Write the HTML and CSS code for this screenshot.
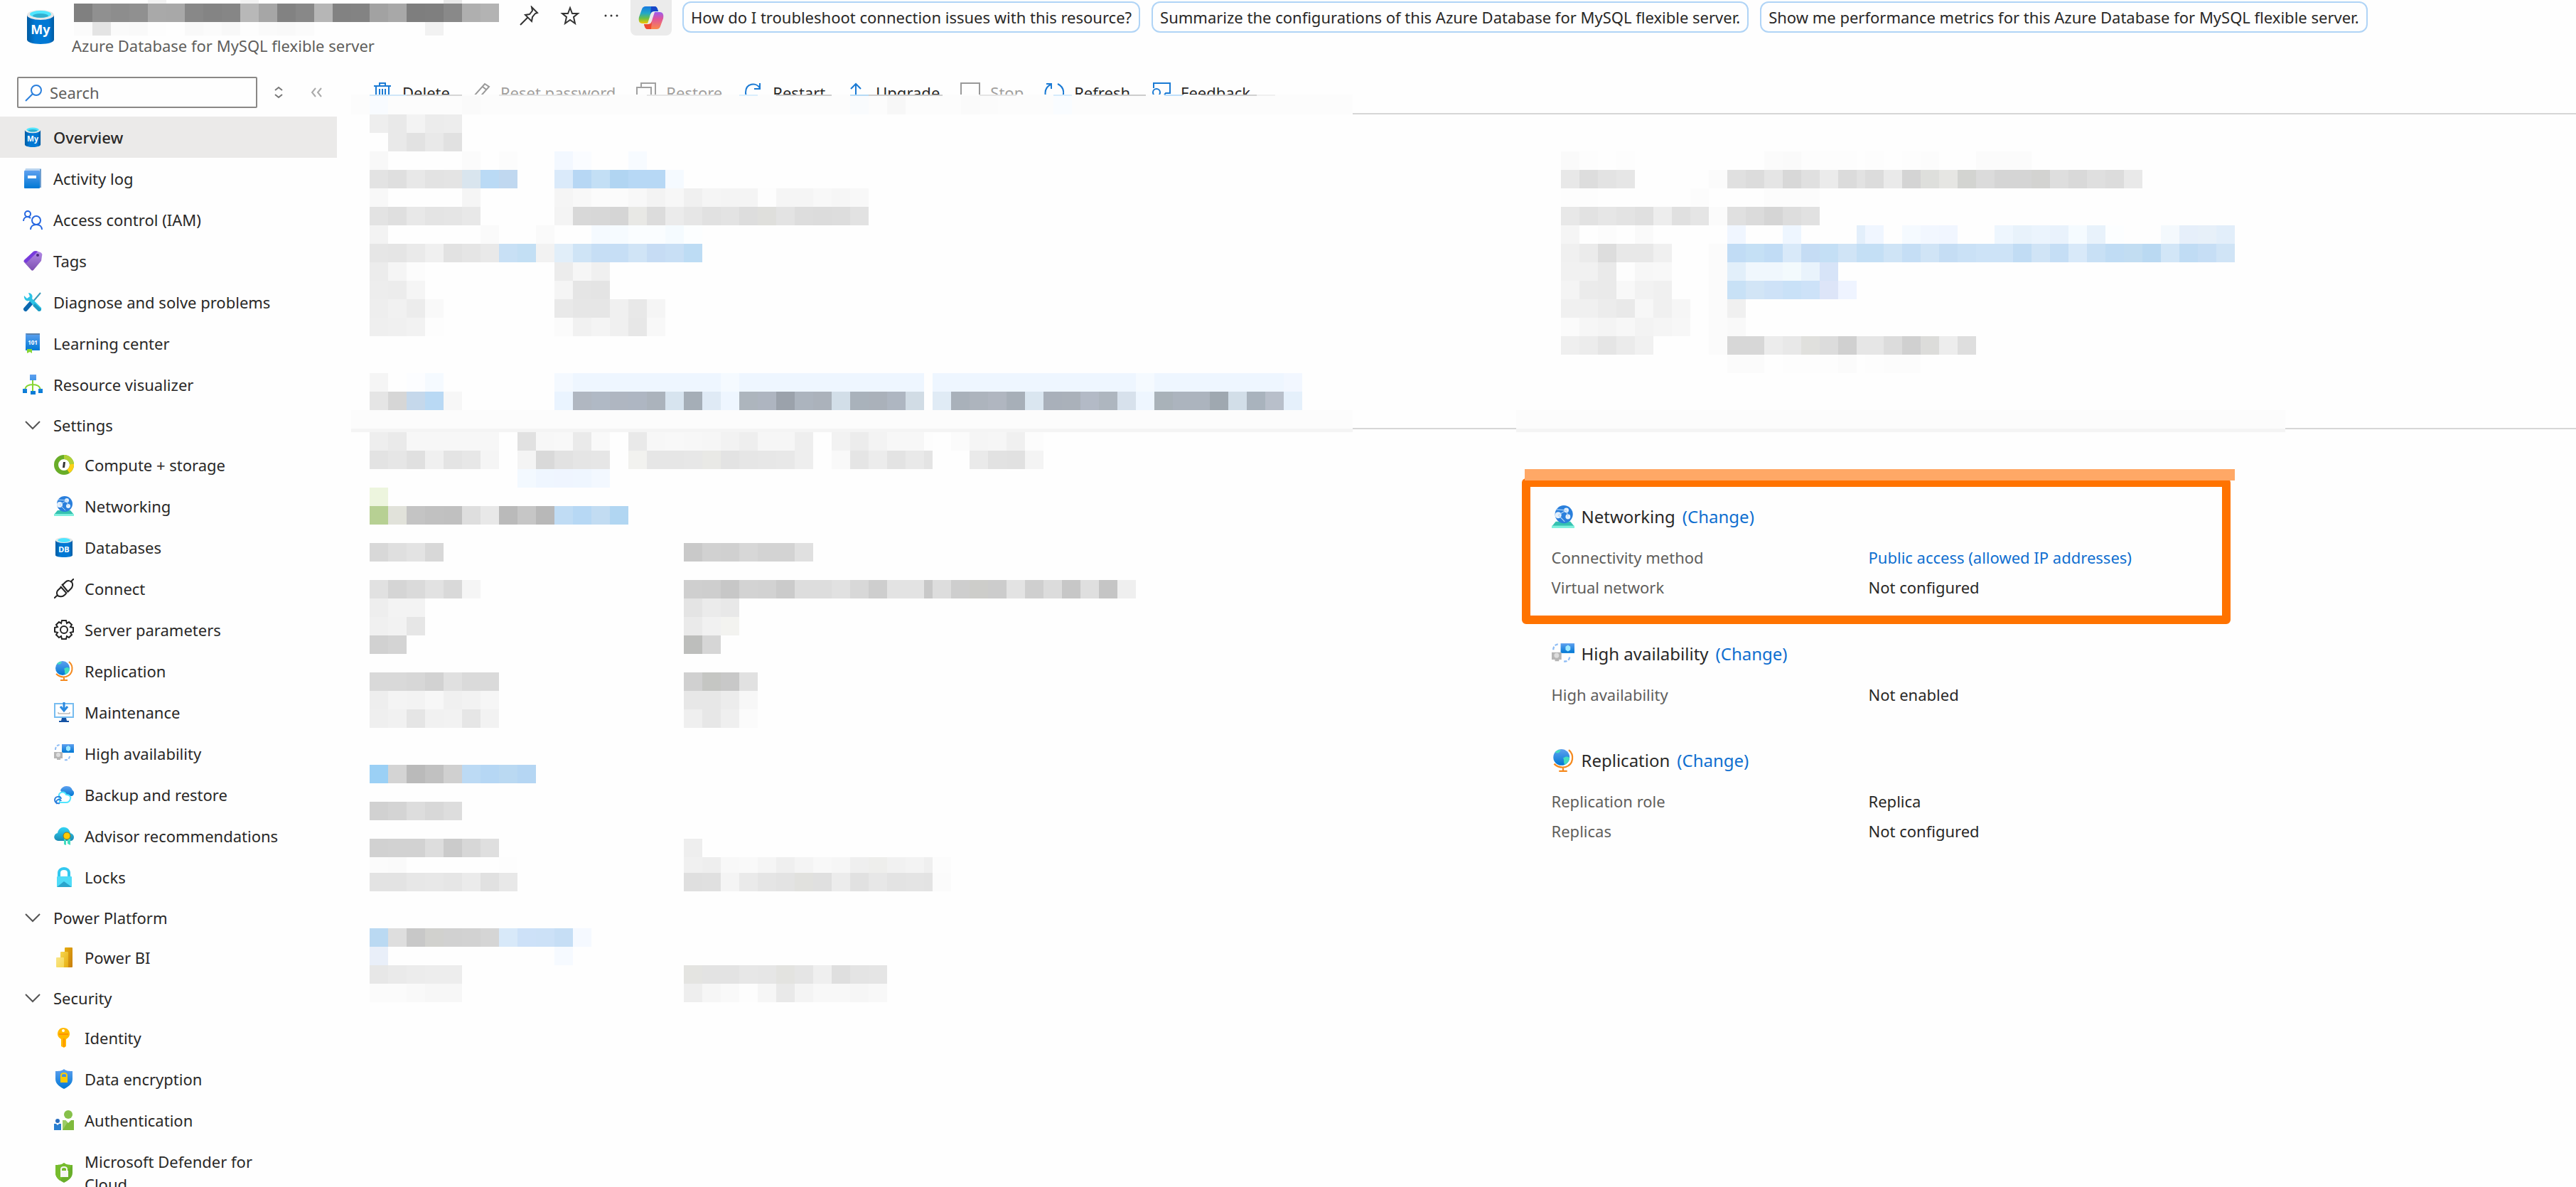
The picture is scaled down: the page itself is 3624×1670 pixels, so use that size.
FILE: index.html
```html
<!DOCTYPE html>
<html lang="en">
<head>
  <meta charset="UTF-8">
  <meta name="viewport" content="width=device-width, initial-scale=1.0">
  <title>Azure Database for MySQL flexible server</title>
  <link rel="stylesheet" href="styles.css">
</head>
<body>
  <!-- shared gradients -->
  <svg class="gradients" aria-hidden="true">
    <defs>
      <linearGradient id="g-blue" x1="0" y1="0" x2="0" y2="1"><stop offset="0" stop-color="#5ea0ef"/><stop offset="1" stop-color="#0078d4"/></linearGradient>
      <linearGradient id="g-db" x1="0" y1="0" x2="1" y2="0"><stop offset="0" stop-color="#005ba1"/><stop offset=".3" stop-color="#0078d4"/><stop offset=".8" stop-color="#0078d4"/><stop offset="1" stop-color="#005ba1"/></linearGradient>
      <linearGradient id="g-cyan" x1="0" y1="0" x2="0" y2="1"><stop offset="0" stop-color="#32d4f5"/><stop offset="1" stop-color="#198ab3"/></linearGradient>
      <linearGradient id="g-purple" x1="0" y1="0" x2="0" y2="1"><stop offset="0" stop-color="#b48be8"/><stop offset="1" stop-color="#7d4fb0"/></linearGradient>
      <linearGradient id="g-pb1" x1="0" y1="0" x2="1" y2="1"><stop offset="0" stop-color="#e6ad10"/><stop offset="1" stop-color="#c87e0e"/></linearGradient>
      <linearGradient id="g-pb2" x1="0" y1="0" x2="1" y2="1"><stop offset="0" stop-color="#f6d751"/><stop offset="1" stop-color="#e6ad10"/></linearGradient>
      <linearGradient id="g-pb3" x1="0" y1="0" x2="1" y2="1"><stop offset="0" stop-color="#f9e589"/><stop offset="1" stop-color="#f6d751"/></linearGradient>
      <linearGradient id="g-cop1" x1="0" y1="0" x2="0" y2="1"><stop offset="0" stop-color="#1878e0"/><stop offset=".4" stop-color="#22a8c8"/><stop offset=".7" stop-color="#6cbf45"/><stop offset="1" stop-color="#f5c500"/></linearGradient>
      <linearGradient id="g-cop2" x1="0" y1="0" x2="0" y2="1"><stop offset="0" stop-color="#9a5cf0"/><stop offset=".4" stop-color="#e0559a"/><stop offset="1" stop-color="#fb8a4a"/></linearGradient>
    </defs>
  </svg>

  <!-- icon sprite -->
  <svg class="sprite" aria-hidden="true">
    <symbol id="i-mysql" viewBox="0 0 38 48">
      <path d="M0 7v35c0 3 8 6 19 6s19-3 19-6V7z" fill="url(#g-db)"/>
      <ellipse cx="19" cy="7" rx="19" ry="7" fill="#e8e8e8"/>
      <ellipse cx="19" cy="6" rx="15" ry="5" fill="#50e6ff"/>
      <ellipse cx="19" cy="8" rx="11" ry="3" fill="#32b0d0"/>
      <text x="19" y="34" text-anchor="middle" class="glyph-my">My</text>
    </symbol>
    <symbol id="i-db" viewBox="0 0 28 28">
      <path d="M2 4v21c0 2 5 3 12 3s12-1 12-3V4z" fill="url(#g-db)"/>
      <ellipse cx="14" cy="4" rx="12" ry="4" fill="#e8e8e8"/>
      <ellipse cx="14" cy="4" rx="9" ry="3" fill="#50e6ff"/>
      <text x="14" y="21" text-anchor="middle" class="glyph-db">DB</text>
    </symbol>
    <symbol id="i-log" viewBox="0 0 28 28">
      <path d="M4 0h22v27h-2V3H3z" fill="#b8d4f0"/><path d="M24 1h2v26h-2z" fill="#6f9fd0"/>
      <rect x="2" y="3" width="22" height="25" rx="1" fill="url(#g-blue)"/>
      <rect x="7" y="10" width="12" height="4" fill="#fff"/>
    </symbol>
    <symbol id="i-iam" viewBox="0 0 28 28">
      <g fill="none" stroke="#2566e0" stroke-width="2"><circle cx="7" cy="6" r="4"/><path d="M1 16c0-4 3-6 6-6 2 0 3 1 4 2"/><circle cx="19" cy="15" r="6"/><path d="M11 28c0-4 3-7 8-7s8 3 8 7"/></g>
    </symbol>
    <symbol id="i-tag" viewBox="0 0 28 28">
      <path d="M2 13 15 1c1-1 3-1 4-1l6 2c2 1 3 3 2 5l-1 7-11 13c-1 1-2 1-3 0L2 16c-1-1-1-2 0-3z" fill="url(#g-purple)"/>
      <path d="M2 13 15 1c1-1 5-1 6 0L5 17l-3-2z" fill="#773adc"/><circle cx="21" cy="6" r="2" fill="#4b2a80"/>
    </symbol>
    <symbol id="i-tools" viewBox="0 0 28 28">
      <path d="M25 1 13 15" stroke="#3a9ab8" stroke-width="2"/><path d="m12 15-8 9" stroke="#0a68b0" stroke-width="6" stroke-linecap="round"/>
      <path d="M2 5l4 4 4-3-2-5c4 0 7 4 5 8l13 13c1 3-2 5-4 4L9 12C5 14 1 9 2 5z" fill="#2cc3e6"/><path d="m17 16 9 8c0 3-2 3-4 3l-8-8z" fill="#1b9cc4"/>
    </symbol>
    <symbol id="i-learn" viewBox="0 0 28 28">
      <rect x="4" y="0" width="20" height="24" fill="url(#g-blue)"/><path d="M4 0h20v2H6z" fill="#5b83ad"/>
      <path d="M6 22h7v6l-3-2-4 2z" fill="#86d633"/><text x="14" y="16" text-anchor="middle" class="glyph-101">101</text>
    </symbol>
    <symbol id="i-visual" viewBox="0 0 28 28">
      <path d="M14 8v16M3 21c1-5 6-7 11-7s10 2 11 7" fill="none" stroke="#86d633" stroke-width="2"/>
      <g fill="url(#g-blue)"><path d="M10 0h9v8h-9zM0 20h6v6H0zM22 20h6v6h-6zM11 23h7v5h-7z"/></g>
    </symbol>
    <symbol id="i-chev" viewBox="0 0 28 28"><path d="m4 9 10 10L24 9" fill="none" stroke="#555" stroke-width="2"/></symbol>
    <symbol id="i-compute" viewBox="0 0 28 28">
      <g fill="none" stroke-width="6"><circle cx="14" cy="14" r="11" stroke="#69ad28"/><path d="M14 3a11 11 0 0 1 11 10" stroke="#b0d136"/><path d="M25 13a11 11 0 0 1-5 10" stroke="#fcd116"/></g>
      <path d="M13 10h3l-1 8h-3z" fill="#333"/>
    </symbol>
    <symbol id="i-net" viewBox="0 0 28 28">
      <path d="M0 26 5 20h18l5 6v2H0z" fill="#35c1b0"/><path d="M0 25h28v3H0z" fill="#7ff0dc"/>
      <circle cx="15" cy="11" r="11" fill="#2a7fdc"/>
      <g fill="#e4f0fc"><circle cx="8" cy="12" r="4"/><circle cx="18" cy="6" r="3"/><circle cx="20" cy="14" r="3"/></g>
      <path d="m8 12 10-6 2 8M5 5l13 1M8 12l8 8" stroke="#b8d8f8" fill="none"/>
    </symbol>
    <symbol id="i-plug" viewBox="0 0 28 28">
      <g fill="none" stroke="#222" stroke-width="2"><path d="m0 28 5-5M28 0l-5 5M10 12l-5 5c-2 3-1 8 3 8 3 1 5 0 7-2l2-2M12 9l4-4c3-3 7-2 9 0 2 3 1 7-1 9l-5 5M9 11l9 10M11 8l9 11"/></g>
    </symbol>
    <symbol id="i-gear" viewBox="0 0 28 28">
      <g fill="none" stroke="#222" stroke-width="2"><circle cx="14" cy="14" r="5"/><path d="M11 1h6l1 4 3-2 4 4-2 3 4 1v6l-4 1 2 3-4 4-3-2-1 4h-6l-1-4-3 2-4-4 2-3-4-1v-6l4-1-2-3 4-4 3 2z"/></g>
    </symbol>
    <symbol id="i-globe" viewBox="0 0 28 28">
      <path d="M21 1c7 6 6 18-4 21-5 1-10 0-14-4M14 22v4M9 27h10" fill="none" stroke="#f58a1f" stroke-width="2"/>
      <circle cx="12" cy="10" r="10" fill="url(#g-blue)"/>
      <path d="M4 4c3-4 6-3 7-3-1 3-3 5-7 3zM14 11c4-3 7-2 8 0-1 5-3 7-6 8-2-3 0-5-2-8z" fill="#43dcc0"/>
    </symbol>
    <symbol id="i-maint" viewBox="0 0 28 28">
      <rect x="1" y="2" width="26" height="19" fill="#fff" stroke="#76bcf0" stroke-width="2"/>
      <path d="M14 0v11m-5-5 5 6 5-6" fill="none" stroke="#2a8ae0" stroke-width="3"/><path d="M6 14v2h16v-2" fill="none" stroke="#999"/>
      <path d="M11 22h6l1 4h3v2H7v-2h3z" fill="#1553a4"/>
    </symbol>
    <symbol id="i-ha" viewBox="0 0 28 28">
      <rect x="11" y="1" width="17" height="12" fill="url(#g-blue)"/><path d="M20 3 23 5v4l-3 2-3-2V5z" fill="#9feaff"/>
      <path d="M0 12h12v9H9v2H4v-2H0z" fill="#b5b5b5"/><circle cx="6" cy="16" r="3" fill="#ddd"/>
      <path d="M2 9c0-4 2-7 7-7M22 18c0 3-3 6-7 5" fill="none" stroke="#8fbdf5" stroke-width="2" stroke-dasharray="4 2"/>
    </symbol>
    <symbol id="i-backup" viewBox="0 0 28 28">
      <path d="M9 8c2-5 6-6 9-6 5 0 7 3 8 6 3 1 3 7-1 8H15z" fill="url(#g-blue)"/>
      <path d="M7 14c1-4 8-5 10 0 5 0 7 3 6 6-1 4-3 5-6 5H8z" fill="#fff" stroke="#50e6ff" stroke-width="2"/>
      <path d="M1 22c0-6 8-7 9-2M8 26c-4 1-7-1-7-5M4 27c-3-5 4-9 6-4" fill="none" stroke="#2a7fdc" stroke-width="2"/>
    </symbol>
    <symbol id="i-advisor" viewBox="0 0 28 28">
      <path d="M6 21C-2 20-1 11 5 10c1-6 6-9 10-8 4 0 7 4 8 8 7 2 6 10 1 11z" fill="url(#g-cyan)"/>
      <path d="M14 18h3v9l-3-1zM19 18h4v9l-4-2z" fill="#43dcc0"/><circle cx="18" cy="14" r="5" fill="#ffca00" stroke="#8a7520"/>
    </symbol>
    <symbol id="i-lock" viewBox="0 0 28 28">
      <path d="M7 14V8c0-8 14-8 14 0v6" fill="none" stroke="#32c8f0" stroke-width="4"/>
      <rect x="4" y="13" width="21" height="15" rx="1" fill="#4fdcf8"/><path d="m4 28 10-8 11 8z" fill="#2aa5cc"/>
    </symbol>
    <symbol id="i-pbi" viewBox="0 0 28 28">
      <rect x="15" y="0" width="11" height="28" rx="1" fill="url(#g-pb1)"/><rect x="9" y="6" width="11" height="22" rx="1" fill="url(#g-pb2)"/><rect x="3" y="14" width="11" height="14" rx="1" fill="url(#g-pb3)"/>
    </symbol>
    <symbol id="i-key" viewBox="0 0 28 28">
      <path d="M13 0c6 0 9 4 9 9 0 3-2 5-5 7v10l-3 2-4-2V16c-3-2-5-4-5-7 0-5 3-9 8-9z" fill="#ffb900"/><circle cx="13" cy="4" r="2" fill="#fff"/><path d="M7 9h13M14 15v12" stroke="#ff9300" stroke-width="2"/>
    </symbol>
    <symbol id="i-shield" viewBox="0 0 28 28">
      <path d="M14 0c3 3 8 3 12 3v11c0 7-6 11-12 14C8 25 2 21 2 14V3c4 0 9 0 12-3z" fill="url(#g-blue)"/>
      <path d="M10 12V9c0-4 8-4 8 0v3" fill="none" stroke="#ffca00" stroke-width="2"/><rect x="9" y="11" width="10" height="8" fill="#ffca00"/>
    </symbol>
    <symbol id="i-auth" viewBox="0 0 28 28">
      <circle cx="20" cy="6" r="6" fill="#86c04a"/><path d="M12 14h4l4 4 4-4h4v14H12z" fill="#7fba3c"/><path d="M12 14h4l3 3-7 11z" fill="#9ccc65"/>
      <circle cx="5" cy="15" r="3" fill="#2a6fc0"/><path d="M0 19h3l2 2 2-2h3v9H0z" fill="#2a7fd0"/>
    </symbol>
    <symbol id="i-defender" viewBox="0 0 28 28">
      <path d="M14 0c3 3 8 3 12 3v11c0 7-6 11-12 14C8 25 2 21 2 14V3c4 0 9 0 12-3z" fill="#68ae2a"/><path d="M14 0C11 3 6 3 2 3v11c0 5 3 8 6 11L26 3c-4 0-9 0-12-3z" fill="#76bc2d"/>
      <path d="M10 12V9c0-4 8-4 8 0v3" fill="none" stroke="#f5f5f5" stroke-width="2"/><rect x="9" y="11" width="11" height="9" fill="#f5f5f5"/>
    </symbol>

    <symbol id="i-pin" viewBox="0 0 28 28"><path d="m18 2 8 8-3 1-4 5-1 6-9-9 6-1 4-5zM12 17 2 27" fill="none" stroke="#333" stroke-width="2"/></symbol>
    <symbol id="i-star" viewBox="0 0 28 28"><path d="m14 3 3 8h8l-6 5 2 9-7-5-7 5 2-9-6-5h8z" fill="none" stroke="#333" stroke-width="2"/></symbol>
    <symbol id="i-dots" viewBox="0 0 28 28"><g fill="#333"><circle cx="6" cy="14" r="1.5"/><circle cx="14" cy="14" r="1.5"/><circle cx="22" cy="14" r="1.5"/></g></symbol>
    <symbol id="i-copilot" viewBox="0 0 36 34">
      <path d="M10 1h13c3 0 4 3 5 7h-6c-4 0-5 4-6 8l-3 9H6c-5 0-6-4-5-9L5 5c1-3 3-4 5-4z" fill="url(#g-cop1)"/><path d="M18 1h5c3 0 4 3 5 7h-6c-3 0-4 1-5 4z" fill="#1646c8"/>
      <path d="M26 33H13c-3 0-4-3-5-7h6c4 0 5-4 6-8l3-9h7c5 0 6 4 5 9l-4 11c-1 3-3 4-5 4z" fill="url(#g-cop2)"/><path d="M18 33h-5c-3 0-4-3-5-7h6c3 0 4-1 5-4z" fill="#ee4a30"/>
    </symbol>
    <symbol id="i-search" viewBox="0 0 28 28"><path d="M2 26 12 16" stroke="#2a7fdc" stroke-width="2"/><circle cx="17" cy="11" r="7" fill="none" stroke="#2a7fdc" stroke-width="2"/></symbol>
    <symbol id="i-updown" viewBox="0 0 28 28"><path d="m9 11 5-4 5 4M9 17l5 4 5-4" fill="none" stroke="#777" stroke-width="2"/></symbol>
    <symbol id="i-collapse" viewBox="0 0 28 28"><path d="m12 8-5 6 5 6M20 8l-5 6 5 6" fill="none" stroke="#aaa" stroke-width="2"/></symbol>
    <symbol id="i-trash" viewBox="0 0 28 28"><path d="M2 5h24M10 5V1h8v4M5 5v22h18V5M10 9v14M14 9v14M18 9v14" fill="none" stroke="#1a7ad4" stroke-width="2"/></symbol>
    <symbol id="i-pencil" viewBox="0 0 28 28"><path d="m20 2 6 4L9 25l-7 2 2-7zM17 6l5 4" fill="none" stroke="#999" stroke-width="2"/></symbol>
    <symbol id="i-restore" viewBox="0 0 28 28"><path d="M7 6V1h20v20h-5M1 7h20v20H1z" fill="none" stroke="#a0a0a0" stroke-width="2"/></symbol>
    <symbol id="i-restart" viewBox="0 0 28 28"><path d="M24 1v8h-8M24 8C19-1 4 1 4 14c0 7 5 11 11 11" fill="none" stroke="#1a7ad4" stroke-width="2"/></symbol>
    <symbol id="i-upgrade" viewBox="0 0 28 28"><path d="M14 18V2M7 9l7-7 7 7M3 19h22" fill="none" stroke="#1a7ad4" stroke-width="2"/></symbol>
    <symbol id="i-stop" viewBox="0 0 28 28"><path d="M1 1h26v26H1z" fill="none" stroke="#999" stroke-width="2"/></symbol>
    <symbol id="i-refresh" viewBox="0 0 28 28"><path d="M3 2h7v7M9 3C-1 8-1 22 9 26M19 2c10 5 11 17 2 23" fill="none" stroke="#1a7ad4" stroke-width="2"/></symbol>
    <symbol id="i-feedback" viewBox="0 0 28 28"><path d="M4 8V1h23v14l-6 0-4 5M1 27c0-7 13-7 13 0" fill="none" stroke="#1a7ad4" stroke-width="2"/><circle cx="8" cy="14" r="5" fill="none" stroke="#1a7ad4" stroke-width="2"/></symbol>
  </svg>

  <header class="topbar">
    <svg class="resource-logo"><use href="#i-mysql"/></svg>
    <div class="resource">
      <div class="resource-row">
        <svg class="mosaic resource-name" data-mosaic="title" role="img" aria-label="Resource name hidden"></svg>
        <div class="resource-actions">
          <button aria-label="Pin"><svg class="icon"><use href="#i-pin"/></svg></button>
          <button aria-label="Favorite"><svg class="icon"><use href="#i-star"/></svg></button>
          <button aria-label="More"><svg class="icon"><use href="#i-dots"/></svg></button>
        </div>
        <button class="copilot" aria-label="Copilot"><svg><use href="#i-copilot"/></svg></button>
        <div class="prompts">
          <button class="prompt">How do I troubleshoot connection issues with this resource?</button>
          <button class="prompt">Summarize the configurations of this Azure Database for MySQL flexible server.</button>
          <button class="prompt">Show me performance metrics for this Azure Database for MySQL flexible server.</button>
        </div>
      </div>
      <div class="resource-type">Azure Database for MySQL flexible server</div>
    </div>
  </header>

  <div class="layout">
    <aside class="sidebar">
      <div class="search-row">
        <label class="search"><svg class="icon"><use href="#i-search"/></svg><input type="text" placeholder="Search" aria-label="Search menu"></label>
        <button aria-label="Expand all"><svg class="icon"><use href="#i-updown"/></svg></button>
        <button aria-label="Collapse menu"><svg class="icon"><use href="#i-collapse"/></svg></button>
      </div>
      <nav class="menu">
        <a class="item active" href="#"><svg class="icon"><use href="#i-mysql"/></svg>Overview</a>
        <a class="item" href="#"><svg class="icon"><use href="#i-log"/></svg>Activity log</a>
        <a class="item" href="#"><svg class="icon"><use href="#i-iam"/></svg>Access control (IAM)</a>
        <a class="item" href="#"><svg class="icon"><use href="#i-tag"/></svg>Tags</a>
        <a class="item" href="#"><svg class="icon"><use href="#i-tools"/></svg>Diagnose and solve problems</a>
        <a class="item" href="#"><svg class="icon"><use href="#i-learn"/></svg>Learning center</a>
        <a class="item" href="#"><svg class="icon"><use href="#i-visual"/></svg>Resource visualizer</a>
        <button class="item group"><svg class="icon"><use href="#i-chev"/></svg>Settings</button>
        <a class="item sub" href="#"><svg class="icon"><use href="#i-compute"/></svg>Compute + storage</a>
        <a class="item sub" href="#"><svg class="icon"><use href="#i-net"/></svg>Networking</a>
        <a class="item sub" href="#"><svg class="icon"><use href="#i-db"/></svg>Databases</a>
        <a class="item sub" href="#"><svg class="icon"><use href="#i-plug"/></svg>Connect</a>
        <a class="item sub" href="#"><svg class="icon"><use href="#i-gear"/></svg>Server parameters</a>
        <a class="item sub" href="#"><svg class="icon"><use href="#i-globe"/></svg>Replication</a>
        <a class="item sub" href="#"><svg class="icon"><use href="#i-maint"/></svg>Maintenance</a>
        <a class="item sub" href="#"><svg class="icon"><use href="#i-ha"/></svg>High availability</a>
        <a class="item sub" href="#"><svg class="icon"><use href="#i-backup"/></svg>Backup and restore</a>
        <a class="item sub" href="#"><svg class="icon"><use href="#i-advisor"/></svg>Advisor recommendations</a>
        <a class="item sub" href="#"><svg class="icon"><use href="#i-lock"/></svg>Locks</a>
        <button class="item group"><svg class="icon"><use href="#i-chev"/></svg>Power Platform</button>
        <a class="item sub" href="#"><svg class="icon"><use href="#i-pbi"/></svg>Power BI</a>
        <button class="item group"><svg class="icon"><use href="#i-chev"/></svg>Security</button>
        <a class="item sub" href="#"><svg class="icon"><use href="#i-key"/></svg>Identity</a>
        <a class="item sub" href="#"><svg class="icon"><use href="#i-shield"/></svg>Data encryption</a>
        <a class="item sub" href="#"><svg class="icon"><use href="#i-auth"/></svg>Authentication</a>
        <a class="item sub tall" href="#"><svg class="icon"><use href="#i-defender"/></svg>Microsoft Defender for Cloud</a>
      </nav>
    </aside>

    <main class="content">
      <div class="toolbar">
        <button><svg class="icon"><use href="#i-trash"/></svg>Delete</button>
        <button disabled><svg class="icon"><use href="#i-pencil"/></svg>Reset password</button>
        <button disabled><svg class="icon"><use href="#i-restore"/></svg>Restore</button>
        <button><svg class="icon"><use href="#i-restart"/></svg>Restart</button>
        <button><svg class="icon"><use href="#i-upgrade"/></svg>Upgrade</button>
        <button disabled><svg class="icon"><use href="#i-stop"/></svg>Stop</button>
        <button><svg class="icon"><use href="#i-refresh"/></svg>Refresh</button>
        <button><svg class="icon"><use href="#i-feedback"/></svg>Feedback</button>
      </div>

      <div class="divider divider-top">
        <div class="veil veil-left"><svg class="mosaic" data-mosaic="edge"></svg></div>
        <div class="line"></div>
      </div>

      <section class="columns essentials">
        <div class="left"><svg class="mosaic" data-mosaic="essentialsLeft" role="img" aria-label="Hidden details"></svg></div>
        <div class="right"><svg class="mosaic" data-mosaic="essentialsRight" role="img" aria-label="Hidden details"></svg></div>
      </section>

      <div class="divider divider-bottom">
        <div class="veil veil-left"></div>
        <div class="line line-gap"></div>
        <div class="veil veil-right"></div>
        <div class="line"></div>
      </div>

      <section class="columns">
        <div class="left"><svg class="mosaic" data-mosaic="properties" role="img" aria-label="Hidden properties"></svg></div>
        <div class="cards">
          <div class="card callout">
            <h2><svg class="icon"><use href="#i-net"/></svg>Networking <a href="#">(Change)</a></h2>
            <dl>
              <dt>Connectivity method</dt><dd><a href="#">Public access (allowed IP addresses)</a></dd>
              <dt>Virtual network</dt><dd>Not configured</dd>
            </dl>
          </div>
          <div class="card">
            <h2><svg class="icon"><use href="#i-ha"/></svg>High availability <a href="#">(Change)</a></h2>
            <dl>
              <dt>High availability</dt><dd>Not enabled</dd>
            </dl>
          </div>
          <div class="card">
            <h2><svg class="icon"><use href="#i-globe"/></svg>Replication <a href="#">(Change)</a></h2>
            <dl>
              <dt>Replication role</dt><dd>Replica</dd>
              <dt>Replicas</dt><dd>Not configured</dd>
            </dl>
          </div>
        </div>
      </section>
    </main>
  </div>
  <script src="mosaic.js"></script>
</body>
</html>
```
FILE: styles.css
```css
* {
  box-sizing: border-box;
}

body {
  margin: 0;
  height: 100vh;
  overflow: hidden;
  background: #fefefe;
  color: #292827;
  font-family: "Noto Sans", "Open Sans", sans-serif;
  font-size: 22px;
  line-height: 32px;
}

a {
  color: #0f6fd0;
  text-decoration: none;
}

button {
  display: flex;
  align-items: center;
  padding: 0;
  border: none;
  background: none;
  color: inherit;
  font: inherit;
  cursor: pointer;
}

.gradients {
  position: absolute;
  width: 0;
  height: 0;
}

.sprite {
  display: none;
}

.icon {
  flex: none;
  width: 28px;
  height: 28px;
}

.mosaic {
  display: block;
  shape-rendering: crispEdges;
}

.glyph-my,
.glyph-db,
.glyph-101 {
  fill: #fff;
  font-weight: bold;
}

.glyph-my {
  font-size: 18px;
}

.glyph-db {
  font-size: 11px;
}

.glyph-101 {
  font-size: 8px;
}

/* header */
.topbar {
  display: flex;
  height: 108px;
  padding-left: 38px;
}

.resource-logo {
  flex: none;
  width: 38px;
  height: 48px;
  margin-top: 14px;
}

.resource {
  flex: 1;
  padding-left: 25px;
}

.resource-row {
  display: flex;
  align-items: flex-start;
  height: 50px;
}

.resource-name {
  flex: none;
  margin-left: 3px;
}

.resource-actions {
  display: flex;
  gap: 30px;
  margin: 8px 13px 0 28px;
}

.copilot {
  justify-content: center;
  width: 58px;
  height: 50px;
  border-radius: 0 0 8px 8px;
  background: #ebebeb;
}

.copilot svg {
  width: 36px;
  height: 34px;
}

.prompts {
  display: flex;
  gap: 16px;
  margin: 2px 0 0 15px;
}

.prompt {
  height: 44px;
  padding: 0 10px;
  border: 2px solid #b0d4f6;
  border-radius: 12px;
  white-space: nowrap;
}

.resource-type {
  color: #605e5c;
  line-height: 28px;
}

/* side menu */
.layout {
  display: flex;
}

.sidebar {
  flex: none;
  width: 494px;
  padding-right: 20px;
}

.search-row {
  display: flex;
  align-items: center;
  gap: 26px;
  height: 44px;
  margin: 0 0 12px 24px;
}

.search-row button {
  width: 28px;
}

.search {
  display: flex;
  align-items: center;
  gap: 8px;
  width: 338px;
  height: 44px;
  padding-left: 8px;
  border: 2px solid #8a8886;
  border-radius: 2px;
}

.search + button {
  margin-left: -10px;
}

.search input {
  width: 100%;
  padding: 0;
  border: none;
  outline: none;
  background: none;
  font: inherit;
}

.search input::placeholder {
  color: #605e5c;
  opacity: 1;
}

.item {
  display: flex;
  align-items: center;
  gap: 15px;
  width: 100%;
  min-height: 58px;
  padding-left: 32px;
  color: #292827;
  text-align: left;
}

.item.active {
  background: #ebeae9;
  font-weight: 500;
}

.group {
  min-height: 55px;
}

.sub {
  padding-left: 76px;
}

.tall {
  padding: 13px 80px 13px 76px;
}

/* main area */
.content {
  flex: 1;
}

.toolbar {
  display: flex;
  align-items: flex-start;
  gap: 29px;
  height: 25px;
  padding: 6px 0 0 30px;
  overflow: hidden;
}

.toolbar button {
  gap: 14px;
}

.toolbar button:disabled {
  color: #a19f9d;
}

.divider {
  display: flex;
}

.divider-top {
  height: 28px;
}

.divider-bottom {
  height: 31px;
}

.veil {
  background: #fcfcfc;
}

.veil-left {
  width: 45%;
  padding-left: 26px;
}

.veil-right {
  width: 1082px;
}

.divider-bottom .veil {
  border-bottom: 5px solid #f4f4f4;
}

.line {
  flex: 1;
  align-self: flex-end;
  height: 2px;
  background: #d6d6d6;
}

.divider-bottom .line {
  margin-bottom: 4px;
}

.line-gap {
  flex: none;
  width: 230px;
}

.columns {
  display: grid;
  grid-template-columns: 11fr 10fr;
}

.essentials {
  height: 416px;
}

.left {
  padding-left: 26px;
}

.right {
  padding: 52px 0 0 62px;
}

.cards {
  padding: 65px 0 0 7px;
}

.card {
  padding: 26px 42px 30px;
}

.callout {
  position: relative;
  width: calc(67% + 4px);
  padding: 26px 30px 19px;
  border: 12px solid #ff7300;
  border-radius: 6px;
}

/* faded bar over the callout's top edge */
.callout::before {
  content: "";
  position: absolute;
  top: -25px;
  left: -8px;
  right: -18px;
  height: 16px;
  background: #ffa866;
}

.card h2 {
  display: flex;
  align-items: center;
  gap: 10px;
  margin: 0 0 20px;
  font-size: 24px;
  font-weight: 400;
  line-height: 32px;
}

.card h2 .icon {
  width: 32px;
  height: 32px;
}

.card dl {
  display: grid;
  grid-template-columns: 446px 1fr;
  margin: 0;
  line-height: 42px;
}

.card dt {
  color: #605e5c;
}

.card dd {
  margin: 0;
}
```
FILE: mosaic.js
```js
// Hidden values are drawn as rows of 26px tiles.
// A row is [y, height, "startColumn:tile tile ...", ...]
// A tile is a two digit grey, a six digit colour, or _ for an empty one.
const TILE = 26;

const mosaics = {
  title: { cols: 23, height: 50, rows: [
    [0, 5, '4:f2', '9:f2', '20:e9'],
    [5, 26, '0:80 90 8d 90 a9 a8 88 84 86 b8 a6 82 88 b6 82 83 a2 a8 7e 7f 89 af b3'],
    [31, 19, '0:fb e4 fa f9 fd _ f9 fb f8 fd fa f9 fb', '19:f2']
  ] },
  edge: { cols: 52, height: 28, rows: [
    [0, 2, '0:cfe6f8 cfe6f8 d5 d5 d5', '7:e5 e5 e5 e5 e5 e5', '15:e5 e5 e5 e5', '20:daeefc _ cc cc cc', '26:b5daf5 cc cc cc cc', '33:e5 e5', '37:d5ebfb _ cc cc cc', '43:bfdffa _ d0 d0 d0 f0'],
    [2, 26, '0:f8fbff', '5:fa', '26:f9fbfd', '28:f7', '32:fa fb', '37:f9fcff']
  ] },
  essentialsLeft: { cols: 52, height: 416, narrow: 30, rows: [
    [0, 26, '0:ee e9 f3 ec ed'],
    [26, 26, '1:e9 e2 e9 e1'],
    [52, 26, '0:f8', '5:fb', '7:fc', '10:f3f8ff fafcff _ _ f7fbff'],
    [78, 26, '0:e3 df e8 e3 e4 d9e5ee badaf5 c0d8f0', '10:daeafa b7d7f4 c3dff5 b1d5f2 b7d8f5 b7d8f5 f5faff'],
    [104, 26, '0:f8', '5:f5', '10:f5 f8 fb fb f8 f3 f7 f0 f5 f4 f4 fd f5 f5 f8 f6 f8'],
    [130, 26, '0:e3 df e8 e4 e5 e8', '10:f4 d8 d7 d5 e8e8e5 dc eb e6 e1 e3 dd dfdfdc e3 dd dc dd e2'],
    [156, 26, '0:f3', '6:fa', '9:fa', '12:f5faff f6fbff fafdff fafdff f5fbff fcfeff'],
    [182, 26, '0:e6 e5 ea f0 e2 e5 e9 c8e0f5 c3dff4 f2 e1eef9 cfe4f6 c6def5 c6def5 d0e4f6 c6dcf4 c8dff5 bddcf4'],
    [208, 26, '0:ec f5 fc', '10:ec f6 f0'],
    [234, 26, '0:ed ec f5', '10:f5 e5 e4'],
    [260, 26, '0:ee f1 ec f9', '10:e9 e6 e6 f0 e8 f5'],
    [286, 26, '0:ef f0 f2 fd', '10:fb f1 f4 f0 e7 f8'],
    [364, 26, '0:f5 _ fcfdff f5faff', '10:f4f9ff eef6ff eef6ff eef6ff eef6ff eef6ff eef6ff eef6ff eef6ff f5faff eef6ff eef6ff eef6ff eef6ff eef6ff eef6ff eef6ff eef6ff eef6ff eef6ff _ eef6ff eef6ff eef6ff eef6ff eef6ff eef6ff eef6ff eef6ff eef6ff eef6ff eef6ff f5faff eef6ff eef6ff eef6ff eef6ff eef6ff eef6ff eef6ff f2f7ff'],
    [390, 26, '0:e5 d6 c5d8eb b9d9f4 f7', '10:eaf4ff b0b7c1 b0b9c5 afb6c1 aeb6c2 abb3bc d7e4ef a5aeb7 dfeaf5 eef6ff adb5bd aeb5c0 9ba2ab acb4be abb2bb d2dee8 a9b2bb aab1ba aeb6c1 d1dce5 _ e0ebf5 a9b1ba adb4bd b0b6c0 a7afb8 dae6f0 a9b0ba aab1ba b3bac6 aeb6bf d7e1ec eef6ff a9b2b9 acb4be acb4be 9fa8b0 d2dee8 a9b3bd b8bfca e5f0fb']
  ] },
  essentialsRight: { cols: 38, height: 312, narrow: 16, rows: [
    [0, 26, '0:fa fd _ fd', '11:fb fa fd fd fd _ fd _ fd fc', '23:fb fb fb'],
    [26, 26, '0:e8 dd e3 e6', '8:fb e0 dc e5 d8 e0 eb db e2 dc ea d4 dedfdc e6e6e3 d3d4d1 db d5 d5 d3d3d1 de d9 df dc e9'],
    [52, 26, '0:fd fd fe', '7:fc', '11:fc fc fc'],
    [78, 26, '0:e8 e2 e6 e3 e0 ed e0 e5 fb e0 db d5 dd e1'],
    [104, 26, '0:f5 _ fc _ fa', '9:f0f6ff', '12:eef6ff', '16:e3effb f0f6ff _ f5faff f2f7ff f1f6ff', '24:eef6fe e8f2fb ebf4fd e9f2fc f5fbff e8f2fb fcfeff', '33:f4f9fd e6effa e7f0f9 e2eefa'],
    [130, 26, '0:f0 eb dd e8 e8 f0', '8:fb c1dcf5 c5e0f5 c1dcf5 d8e9f9 c5dcf4 c4dff5 d0e4f6 c4dff5 c4dff5 cfe4f6 c5def5 d0e4f6 c5ddf4 cae1f6 cde3f7 cde3f7 c1dcf4 d0e4f6 c5def5 d8e9f9 c8e0f5 c0dcf4 c2ddf2 bad9f2 d2e6f7 c0dcf4 c6def5 d0e4f6'],
    [156, 26, '0:f1 f1 ea fd f7 f8', '8:fb e2effa f0f7fd f0f7fd f3fafd e9f3fc d7e4f8'],
    [182, 26, '0:f4 eb ea f8 f2 f0', '8:fb c8e1f6 d2e5f6 cee2f7 c9e1f7 cde2f8 dde5f8 eff4ff'],
    [208, 26, '0:f0 f0 ec e9 f7 f0 f6', '8:fb f0'],
    [234, 26, '0:fb f6 f4 f7 f3 f5 f7', '8:fb f9'],
    [260, 26, '0:ef ec e5 eb f1', '8:fb d7 d7 ec e8 e0e0dd dc d0 e6 e6 dc d0 dcdcda ed de'],
    [286, 26, '9:fb fb _ fd fd fd fb _ fd fc fc']
  ] },
  properties: { cols: 43, height: 802, narrow: 30, rows: [
    [0, 26, '0:ee ea f7 f7 f7 f7 f7', '8:e1 f7 f8 ea f9', '14:e9 f7 f8 f7 f6 f2 ee f6 f6 ee', '25:f2 ec f3 f7 f7 fd', '32:fb f5 f6 f0 fc'],
    [26, 26, '0:e3 e6 e0 f0 e4 e7 f5', '8:f4 d9 e2 e5 e6', '14:f2f2ef e6 e6 e7 e9e9e6 e3 e6 e7 e8 ee', '25:f9 e5 ec e3 e9 e4', '33:ea e2 e1 f4'],
    [52, 26, '8:f3f9ff eff6ff eff5ff eff6ff f3f8ff'],
    [78, 26, '0:edf5de'],
    [104, 26, '0:b7d093 e1e2da c4 c1 c0 de e8 ba c6 b8 c0dcf4 b7d8f4 c2dcf2 b1d6f2'],
    [156, 26, '0:d8 df e3 d8', '17:c9 d1 d0 d7 d3 d3 e0'],
    [208, 26, '0:e1 d5 da e2 d9 f5', '17:cf ce c7 d3 d2 cb dd dd e1 d8 ce e3 e3 c8 dd ce cdcdca cc e3 cf dc c7 df c5 ef'],
    [234, 26, '0:ee f3 f3', '17:e4 eb e8'],
    [260, 26, '0:f0 f2 e6', '17:ea f1 f3f3f0'],
    [286, 26, '0:d1 d4', '17:bdbebc d6'],
    [338, 26, '0:d9 d9 d7 d2 e0 da da', '17:d0 c5c6c3 c8 e1'],
    [364, 26, '0:ee f4 f3 f7 f0 f2 f6', '17:e7 e7 ec f7'],
    [390, 26, '0:ef f1 e5 f1 f2 e6 f2', '17:ef e7 ef fb'],
    [468, 26, '0:9bd0f5 d4 ba c1 d0 bcdaf4 b6d7f4 bad9f2 b5d6f3'],
    [520, 26, '0:d1 d4 dd d8 dd'],
    [572, 26, '0:d1 d2 d2 dd cb d7 df', '17:ee'],
    [598, 22, '0:fb fa', '7:fd', '17:f0 ee f8 f9 f5 ef f4 f8 f6 ef eeeeec f1 f3 ef fc'],
    [620, 26, '0:e3 e3 e7 e8 e6 eb e1 e8', '17:df e0 f4 ea e5 e3 e1e1de e0 ec e1 e7 e3 e4 e3 fb'],
    [698, 26, '0:bad9f2 de c8 d1d1ce d1 d2 d5 d8e9f9 cde1f8 cce1f7 c6def5 f5f9ff'],
    [724, 26, '0:e9eff9', '10:f6faff'],
    [750, 26, '0:e7 ea ec ed ed', '17:e4e4e1 e3 e3 e7 e6 e3e3e0 e5 ef df e4 e5'],
    [776, 26, '0:fb fb f9 f7 f7', '17:ee f6 f9 fd f6 e9 f4 f8 f8 f6 f8']
  ] }
};

// one column is only 12px wide where two tile grids meet
function columnX(col, narrow) {
  return col * TILE - (narrow !== undefined && col > narrow ? 14 : 0);
}

document.querySelectorAll('[data-mosaic]').forEach(svg => {
  const m = mosaics[svg.dataset.mosaic];
  svg.setAttribute('width', m.cols * TILE);
  svg.setAttribute('height', m.height);
  m.rows.forEach(([y, height, ...runs]) => {
    runs.forEach(run => {
      const [start, tiles] = run.split(':');
      tiles.split(' ').forEach((tile, i) => {
        if (tile === '_') return;
        const x = columnX(+start + i, m.narrow);
        const rect = document.createElementNS('http://www.w3.org/2000/svg', 'rect');
        rect.setAttribute('x', x);
        rect.setAttribute('y', y);
        rect.setAttribute('width', columnX(+start + i + 1, m.narrow) - x);
        rect.setAttribute('height', height);
        rect.setAttribute('fill', '#' + (tile.length === 2 ? tile.repeat(3) : tile));
        svg.appendChild(rect);
      });
    });
  });
});
```
